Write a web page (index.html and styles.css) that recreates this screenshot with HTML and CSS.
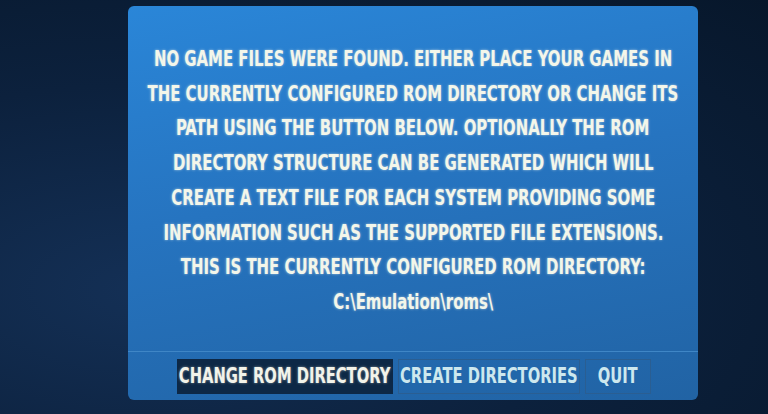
FILE: index.html
```html
<!DOCTYPE html>
<html>
<head>
<meta charset="utf-8">
<title>No game files</title>
<link rel="stylesheet" href="styles.css">
</head>
<body>
<div class="screen">
    <div class="dialog">
        <div class="message">
            <p>NO GAME FILES WERE FOUND. EITHER PLACE YOUR GAMES IN</p>
            <p>THE CURRENTLY CONFIGURED ROM DIRECTORY OR CHANGE ITS</p>
            <p>PATH USING THE BUTTON BELOW. OPTIONALLY THE ROM</p>
            <p>DIRECTORY STRUCTURE CAN BE GENERATED WHICH WILL</p>
            <p>CREATE A TEXT FILE FOR EACH SYSTEM PROVIDING SOME</p>
            <p>INFORMATION SUCH AS THE SUPPORTED FILE EXTENSIONS.</p>
            <p>THIS IS THE CURRENTLY CONFIGURED ROM DIRECTORY:</p>
            <p>C:\Emulation\roms\</p>
        </div>
        <div class="buttons">
            <div class="btn selected"><span>CHANGE ROM DIRECTORY</span></div>
            <div class="btn create"><span>CREATE DIRECTORIES</span></div>
            <div class="btn quit"><span>QUIT</span></div>
        </div>
    </div>
</div>
</body>
</html>
```

FILE: styles.css
```css
html, body {
    margin: 0;
    padding: 0;
}

.screen {
    width: 768px;
    height: 414px;
    overflow: hidden;
    background: radial-gradient(ellipse at 20% 70%, #143056 0%, #0c213d 50%, #07172b 100%);
    padding-top: 6px;
    box-sizing: border-box;
}

.dialog {
    width: 570px;
    height: 394px;
    margin-left: 128px;
    border-radius: 6px;
    background: linear-gradient(170deg, #2a86d8 0%, #2674c0 45%, #2163a4 100%);
    display: flex;
    flex-direction: column;
    box-sizing: border-box;
}

.message {
    flex: 1;
    padding-top: 36px;
    display: flex;
    flex-direction: column;
    align-items: center;
    font-family: "DejaVu Sans Condensed", "DejaVu Sans", sans-serif;
    font-weight: bold;
    font-size: 21px;
    line-height: 34.7px;
    color: #f3f6ea;
    text-shadow: 0 0 3px rgba(255, 255, 240, 0.6);
}

.message p {
    margin: 0;
    white-space: nowrap;
    transform: scaleX(0.79);
}

.buttons {
    height: 48px;
    border-top: 1px solid #3f86c6;
    display: flex;
    justify-content: center;
    align-items: center;
    gap: 5px;
    padding-left: 2px;
    font-family: "DejaVu Sans Condensed", "DejaVu Sans", sans-serif;
    font-weight: bold;
    font-size: 21px;
}

.btn {
    height: 35px;
    display: flex;
    align-items: center;
    justify-content: center;
    color: #cde8ee;
    border: 1px solid #2a5e92;
    box-sizing: border-box;
    white-space: nowrap;
}

.btn span {
    transform: scaleX(0.78);
}

.btn.selected {
    width: 216px;
    background: #0d2846;
    border-color: #0d2846;
    color: #f2f3ea;
    text-shadow: 0 0 3px rgba(255, 255, 240, 0.5);
}

.btn.create {
    width: 182px;
}

.btn.quit {
    width: 66px;
}
```
